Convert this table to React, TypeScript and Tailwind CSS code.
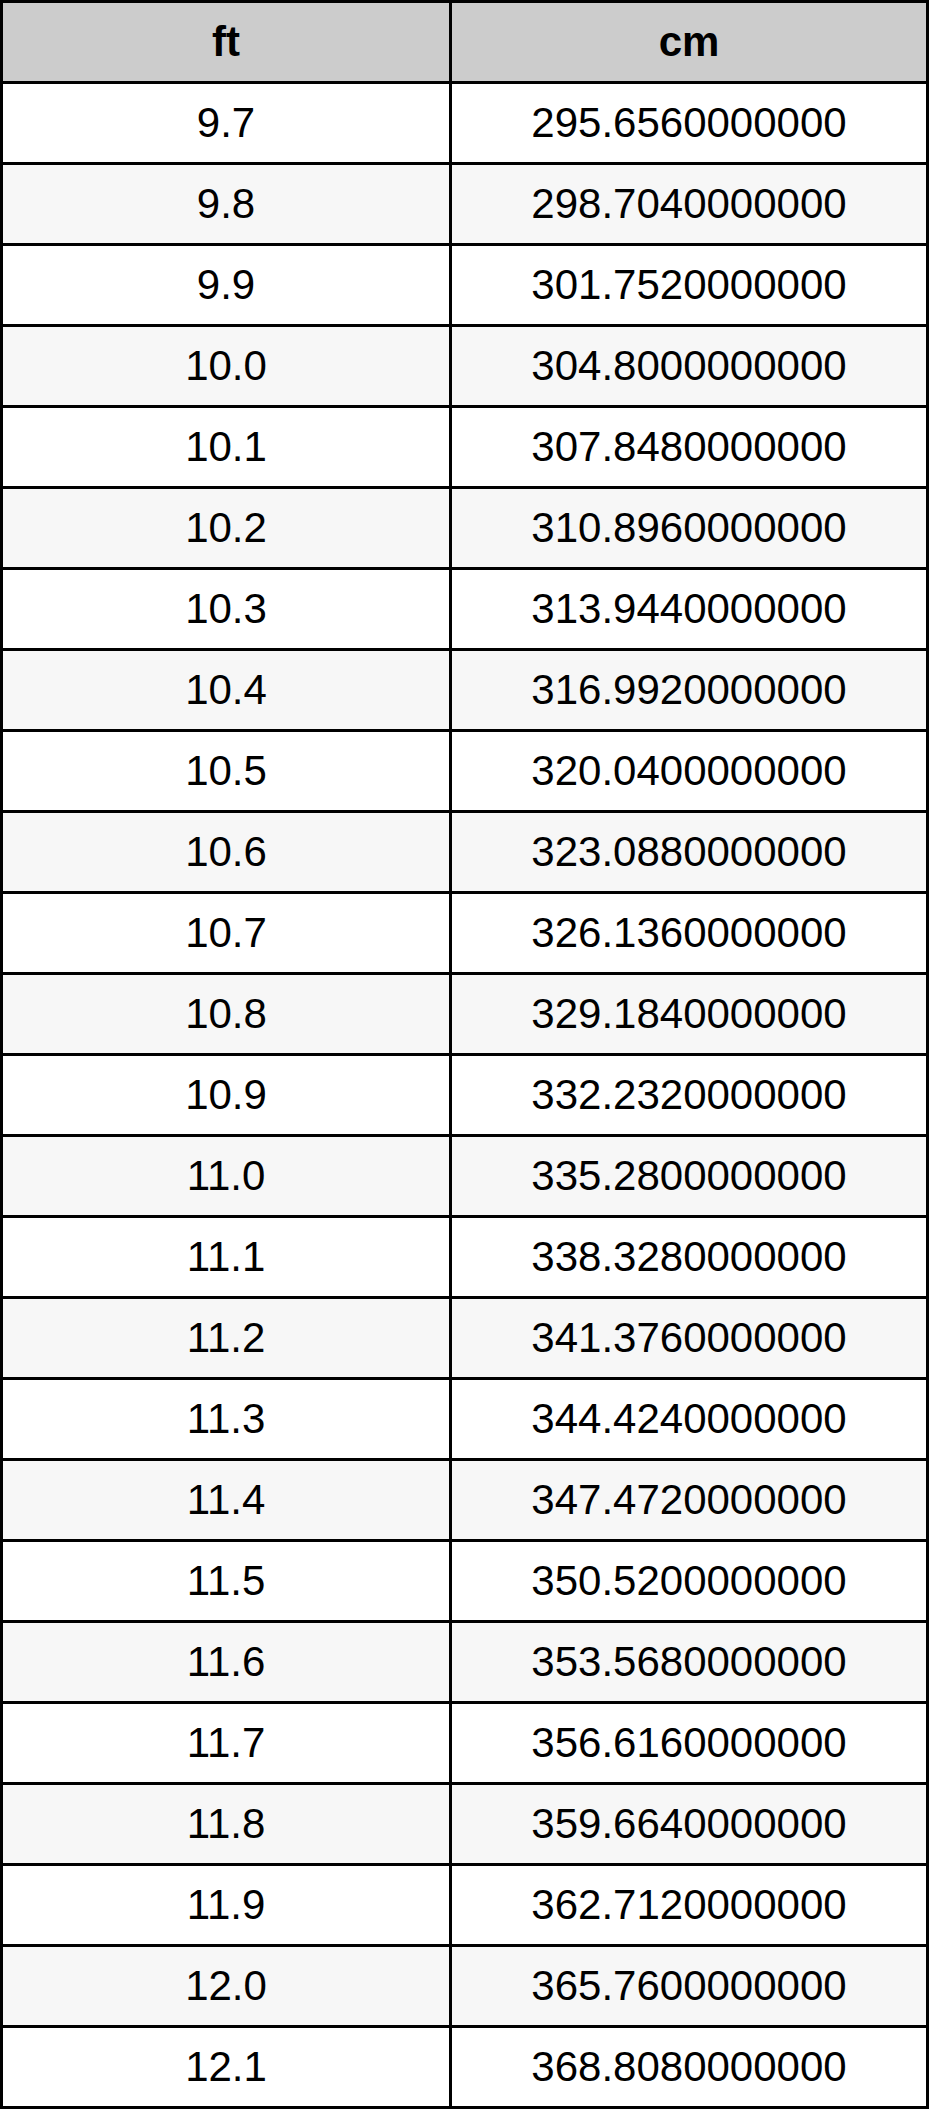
import React from "react";

const rows: [string, string][] = [
  ["9.7", "295.6560000000"],
  ["9.8", "298.7040000000"],
  ["9.9", "301.7520000000"],
  ["10.0", "304.8000000000"],
  ["10.1", "307.8480000000"],
  ["10.2", "310.8960000000"],
  ["10.3", "313.9440000000"],
  ["10.4", "316.9920000000"],
  ["10.5", "320.0400000000"],
  ["10.6", "323.0880000000"],
  ["10.7", "326.1360000000"],
  ["10.8", "329.1840000000"],
  ["10.9", "332.2320000000"],
  ["11.0", "335.2800000000"],
  ["11.1", "338.3280000000"],
  ["11.2", "341.3760000000"],
  ["11.3", "344.4240000000"],
  ["11.4", "347.4720000000"],
  ["11.5", "350.5200000000"],
  ["11.6", "353.5680000000"],
  ["11.7", "356.6160000000"],
  ["11.8", "359.6640000000"],
  ["11.9", "362.7120000000"],
  ["12.0", "365.7600000000"],
  ["12.1", "368.8080000000"],
];

export default function App() {
  return (
    <div className="bg-white w-[930px] min-h-[2115px]" style={{ fontFamily: '"Liberation Sans", Arial, sans-serif' }}>
      <div className="grid w-[929px] grid-cols-[446px_474px] auto-rows-[78px] gap-[3px] bg-black p-[3px] text-black text-[42px] leading-none">
        <div className="flex items-center justify-center bg-[#cccccc] font-bold">ft</div>
        <div className="flex items-center justify-center bg-[#cccccc] font-bold">cm</div>
        {rows.map(([ft, cm], i) => {
          const bg = i % 2 === 1 ? "bg-[#f7f7f7]" : "bg-white";
          return (
            <React.Fragment key={ft}>
              <div className={`flex items-center justify-center ${bg}`}>{ft}</div>
              <div className={`flex items-center justify-center ${bg}`}>{cm}</div>
            </React.Fragment>
          );
        })}
      </div>
    </div>
  );
}
